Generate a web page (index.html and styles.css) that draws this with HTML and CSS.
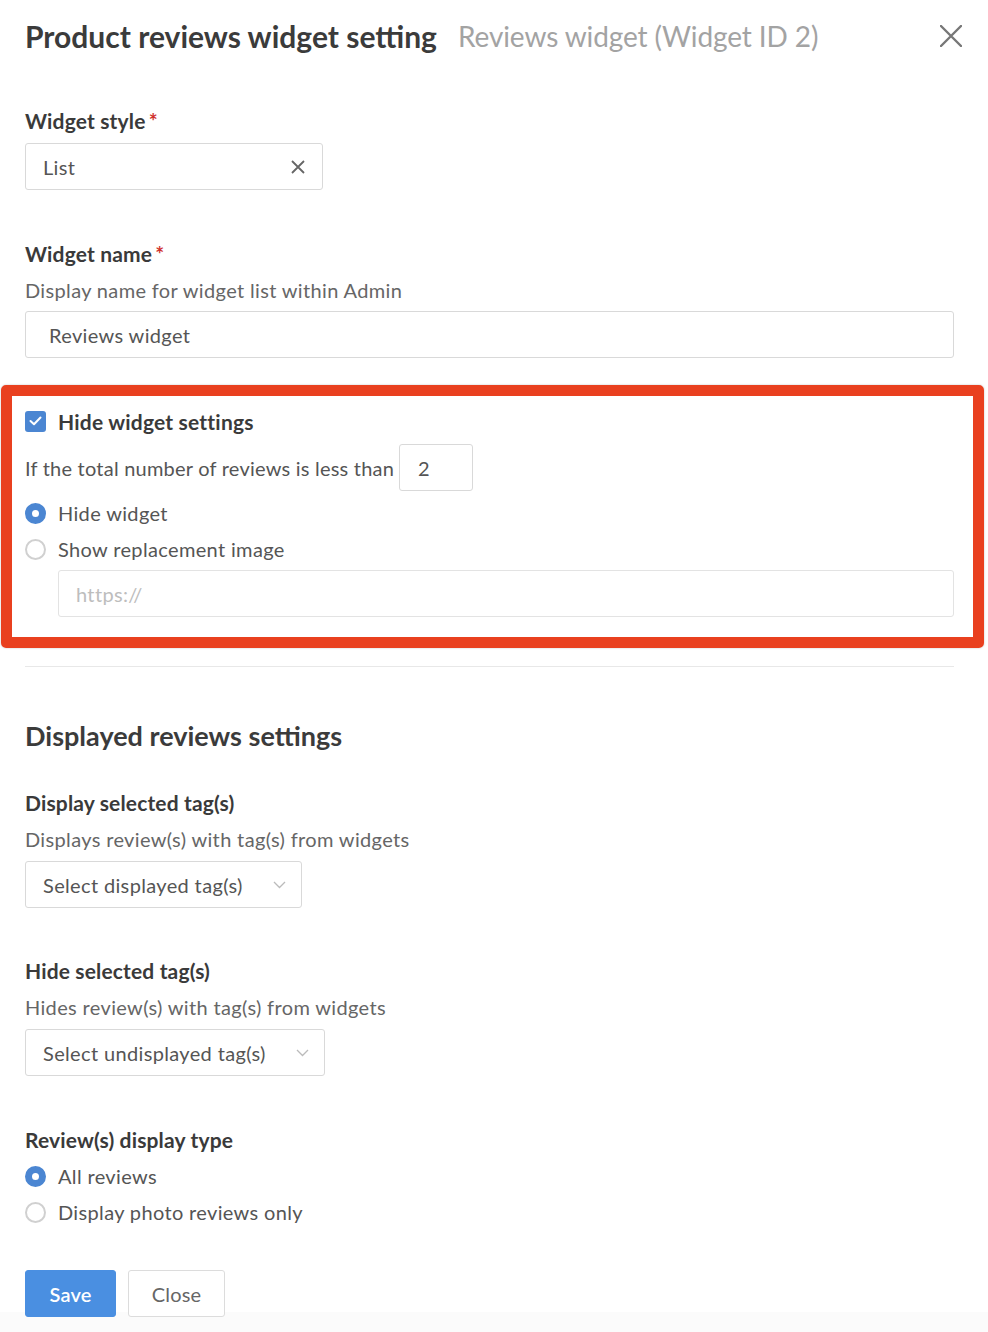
FILE: index.html
```html
<!DOCTYPE html>
<html lang="en">
<head>
<meta charset="utf-8">
<title>Product reviews widget setting</title>
<link rel="stylesheet" href="styles.css">
</head>
<body>
<div class="modal">
  <header class="modal-header">
    <h1 class="title">Product reviews widget setting</h1>
    <span class="subtitle">Reviews widget (Widget ID 2)</span>
    <button class="close-x" aria-label="Close">
      <svg width="22" height="22" viewBox="0 0 22 22"><path d="M1 1L21 21M21 1L1 21" stroke="#777" stroke-width="2.4" fill="none" stroke-linecap="round"/></svg>
    </button>
  </header>

  <div class="field f-style">
    <div class="label">Widget style <span class="req">*</span></div>
    <div class="select select-style">
      <span class="select-text">List</span>
      <svg class="clear-icon" width="14" height="14" viewBox="0 0 14 14"><path d="M1 1L13 13M13 1L1 13" stroke="#666" stroke-width="1.8" fill="none"/></svg>
    </div>
  </div>

  <div class="field f-name">
    <div class="label">Widget name <span class="req">*</span></div>
    <div class="help">Display name for widget list within Admin</div>
    <div class="input input-name">Reviews widget</div>
  </div>

  <section class="hide-section">
    <div class="annotation"></div>
    <div class="check-row">
      <span class="checkbox">
        <svg width="13" height="10" viewBox="0 0 13 10"><path d="M1.5 5L5 8.3L11.5 1.5" stroke="#fff" stroke-width="2" fill="none" stroke-linecap="round" stroke-linejoin="round"/></svg>
      </span>
      <span class="check-label">Hide widget settings</span>
    </div>
    <div class="threshold-row">
      <span class="text threshold-text">If the total number of reviews is less than</span>
      <div class="input input-num">2</div>
    </div>
    <div class="radio-row r-first">
      <span class="radio on"></span>
      <span class="text">Hide widget</span>
    </div>
    <div class="radio-row">
      <span class="radio"></span>
      <span class="text">Show replacement image</span>
    </div>
    <div class="input input-url placeholder">https://</div>
  </section>

  <hr class="divider">

  <h2 class="section-title">Displayed reviews settings</h2>

  <div class="field f-display">
    <div class="label">Display selected tag(s)</div>
    <div class="help">Displays review(s) with tag(s) from widgets</div>
    <div class="select select-tags">
      <span class="select-text">Select displayed tag(s)</span>
      <svg class="chevron" width="13" height="8" viewBox="0 0 13 8"><path d="M1 1L6.5 6.5L12 1" stroke="#bbb" stroke-width="1.3" fill="none"/></svg>
    </div>
  </div>

  <div class="field f-hide">
    <div class="label">Hide selected tag(s)</div>
    <div class="help">Hides review(s) with tag(s) from widgets</div>
    <div class="select select-tags">
      <span class="select-text">Select undisplayed tag(s)</span>
      <svg class="chevron" width="13" height="8" viewBox="0 0 13 8"><path d="M1 1L6.5 6.5L12 1" stroke="#bbb" stroke-width="1.3" fill="none"/></svg>
    </div>
  </div>

  <div class="field f-type">
    <div class="label">Review(s) display type</div>
    <div class="radio-row r-first">
      <span class="radio on"></span>
      <span class="text">All reviews</span>
    </div>
    <div class="radio-row">
      <span class="radio"></span>
      <span class="text">Display photo reviews only</span>
    </div>
  </div>

  <footer class="actions">
    <button class="btn btn-primary">Save</button>
    <button class="btn btn-default">Close</button>
  </footer>
</div>
</body>
</html>
```
FILE: styles.css
```css
* { box-sizing: border-box; }

html, body {
  margin: 0;
  padding: 0;
  background: #fff;
}

body {
  font-family: "Lato", "Open Sans", sans-serif;
  color: #555;
  width: 988px;
  height: 1332px;
  overflow: hidden;
  background: linear-gradient(to bottom, #fff 0, #fff 1312px, #fbfbfb 1312px);
}

.modal {
  padding: 18px 34px 0 25px;
}

.modal-header {
  display: flex;
  align-items: center;
  height: 36px;
}

.title {
  margin: 0;
  font-size: 30px;
  font-weight: 700;
  color: #3b3b3b;
  line-height: 36px;
}

.subtitle {
  margin-left: 21px;
  font-size: 28px;
  color: #a3a3a3;
  line-height: 36px;
  letter-spacing: -0.1px;
}

.close-x {
  margin-left: auto;
  margin-right: -8px;
  border: 0;
  background: none;
  padding: 0;
  width: 22px;
  height: 22px;
  display: flex;
}

.field { display: flex; flex-direction: column; align-items: flex-start; }
.f-style { margin-top: 55px; }
.f-name { margin-top: 52px; }
.f-display { margin-top: 39px; }
.f-hide { margin-top: 51px; }
.f-type { margin-top: 52px; }

.label {
  font-size: 21px;
  font-weight: 700;
  color: #3a3a3a;
  line-height: 24px;
  letter-spacing: 0.15px;
}

.req { color: #d0312d; margin-left: -2px; }

.help {
  margin-top: 12px;
  font-size: 20px;
  line-height: 24px;
  color: #666;
  letter-spacing: 0.35px;
}

.select, .input {
  border: 1px solid #d9d9d9;
  border-radius: 3px;
  height: 47px;
  display: flex;
  align-items: center;
  font-size: 20px;
  color: #555;
  letter-spacing: 0.35px;
  background: #fff;
}

.select { margin-top: 10px; padding: 0 15px 0 17px; }
.select-style { width: 298px; padding-right: 16px; }
.select-text { flex: 1; }
.clear-icon { margin-right: 1px; }

.select-tags { gap: 30px; }
.select-tags .select-text { flex: none; }

.input-name {
  margin-top: 9px;
  width: 100%;
  align-self: stretch;
  padding-left: 23px;
}

.hide-section {
  position: relative;
  margin-top: 51px;
}

.annotation {
  position: absolute;
  top: -24px;
  left: -24px;
  right: -30px;
  bottom: -31px;
  border: 11px solid #e9401f;
  border-radius: 5px;
  box-shadow: 0 0 2px rgba(0,0,0,0.25);
  pointer-events: none;
}

.check-row, .radio-row {
  display: flex;
  align-items: center;
  height: 24px;
}

.checkbox {
  width: 21px;
  height: 21px;
  border-radius: 3px;
  background: #4b86d2;
  display: flex;
  align-items: center;
  justify-content: center;
  margin-right: 12px;
}

.check-label {
  font-size: 21px;
  font-weight: 700;
  color: #3a3a3a;
  letter-spacing: 0.2px;
}

.text {
  font-size: 20px;
  color: #555;
  letter-spacing: 0.35px;
}

.threshold-text { letter-spacing: 0.22px; }

.threshold-row {
  display: flex;
  align-items: center;
  margin-top: 11px;
}

.input-num {
  margin-left: 5px;
  width: 74px;
  padding-left: 18px;
}

.radio-row { margin-top: 12px; }
.hide-section .r-first { margin-top: 10px; }

.radio {
  width: 21px;
  height: 21px;
  border-radius: 50%;
  border: 2px solid #d0d0d0;
  margin-right: 12px;
  background: #fff;
  flex: none;
}

.radio.on {
  border: 7px solid #4b86d2;
  background: #fff;
}

.input-url {
  margin: 9px 0 0 33px;
  border-color: #e3e3e3;
  padding-left: 17px;
}

.placeholder { color: #bdbdbd; }

.divider {
  margin: 49px 0 0;
  border: 0;
  border-top: 1px solid #e8e8e8;
}

.section-title {
  margin: 53px 0 0;
  font-size: 27px;
  font-weight: 700;
  color: #3b3b3b;
  line-height: 32px;
}

.f-type .r-first { margin-top: 12px; }

.actions {
  display: flex;
  gap: 12px;
  margin-top: 46px;
}

.btn {
  height: 47px;
  border-radius: 3px;
  font-family: inherit;
  font-size: 20px;
  letter-spacing: 0.2px;
  padding: 0;
}

.btn-primary {
  width: 91px;
  background: #4a8fe1;
  border: 1px solid #4a8fe1;
  color: #fff;
  font-weight: 600;
}

.btn-default {
  width: 97px;
  background: #fff;
  border: 1px solid #dcdcdc;
  color: #666;
}
```
